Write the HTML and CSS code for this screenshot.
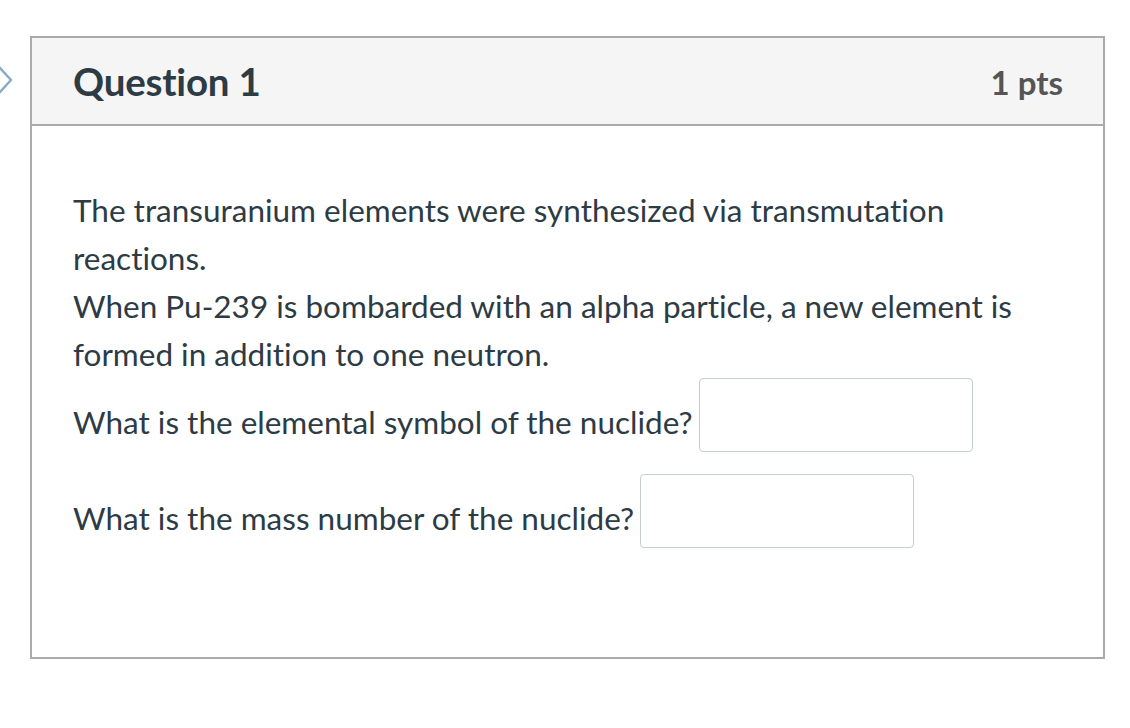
FILE: index.html
```html
<!DOCTYPE html>
<html lang="en">
<head>
<meta charset="utf-8">
<title>Question 1</title>
<link rel="stylesheet" href="styles.css">
</head>
<body>
<div class="page">
  <svg class="chevron" width="14" height="28" viewBox="0 0 14 28" aria-hidden="true">
    <path d="M-1 1 L11 14 L-1 27" fill="none" stroke="#86a9c4" stroke-width="2.4" stroke-linejoin="round"/>
  </svg>
  <div class="card">
    <div class="card-header">
      <h2 class="title">Question 1</h2>
      <span class="pts">1 pts</span>
    </div>
    <div class="card-body">
      <p class="text">The transuranium elements were synthesized via transmutation reactions.<br>When Pu-239 is bombarded with an alpha particle, a new element is formed in addition to one neutron.</p>
      <div class="qrow q1"><span class="label">What is the elemental symbol of the nuclide?</span><input class="answer" type="text"></div>
      <div class="qrow q2"><span class="label">What is the mass number of the nuclide?</span><input class="answer" type="text"></div>
    </div>
  </div>
</div>
</body>
</html>
```

FILE: styles.css
```css
html, body {
  margin: 0;
  padding: 0;
  background: #ffffff;
}
body {
  font-family: Lato, "Noto Sans", sans-serif;
  color: #2d3b45;
  font-variant-ligatures: none;
}
.page {
  position: relative;
  padding: 36px 25px 0 30px;
}
.chevron {
  position: absolute;
  left: 0;
  top: 66px;
}
.card {
  width: 1075px;
  box-sizing: border-box;
  border: 2px solid #aaaaaa;
}
.card-header {
  height: 88px;
  box-sizing: border-box;
  background: #f5f5f5;
  border-bottom: 2px solid #aaaaaa;
  display: flex;
  align-items: center;
  justify-content: space-between;
  padding: 0 40px 0 41px;
}
.title {
  margin: 0;
  font-size: 38.5px;
  font-weight: 700;
  color: #2d3b45;
  letter-spacing: -0.2px;
}
.pts {
  font-size: 33px;
  font-weight: 700;
  color: #555555;
  padding-top: 2px;
}
.card-body {
  padding: 60px 41px 109px 41px;
  font-size: 31.5px;
  line-height: 48px;
}
.text {
  margin: 0;
}
.qrow {
  display: flex;
  align-items: center;
  height: 74px;
}
.q2 {
  margin-top: 22px;
}
.label {
  white-space: nowrap;
  margin-top: 14px;
  margin-right: 6px;
}
.answer {
  width: 274px;
  height: 74px;
  box-sizing: border-box;
  border: 1px solid #c7cdd1;
  border-radius: 4px;
  background: #ffffff;
  margin: 0;
  padding: 0 12px;
  font: inherit;
}
```
